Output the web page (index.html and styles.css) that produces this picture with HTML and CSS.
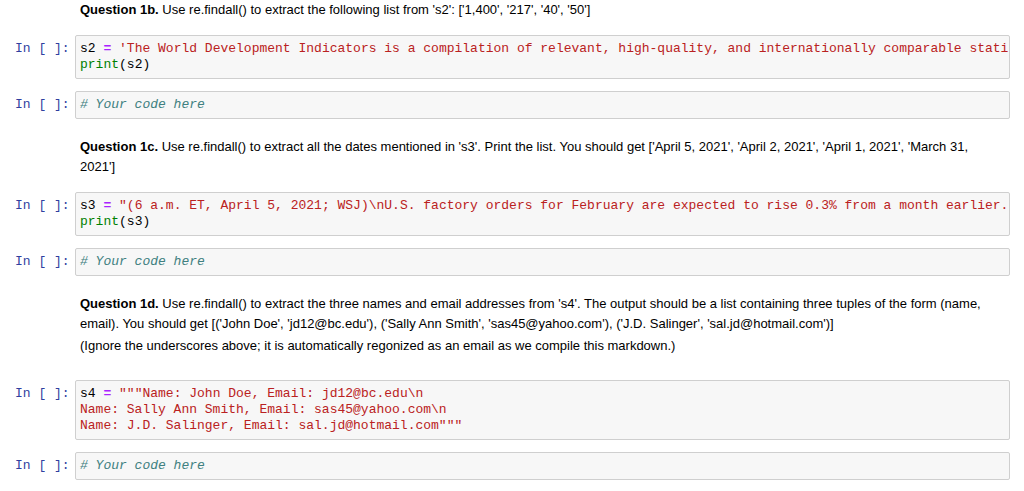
FILE: index.html
```html
<!DOCTYPE html>
<html>
<head>
<meta charset="utf-8">
<link rel="stylesheet" href="styles.css">
</head>
<body>
<div class="notebook">
  <div class="md md-first">
    <p><b>Question 1b.</b> Use re.findall() to extract the following list from 's2': ['1,400', '217', '40', '50']</p>
  </div>
  <div class="cell cell-after-md">
    <div class="prompt">In [ ]:</div>
    <div class="input"><span class="n">s2</span> <span class="o">=</span> <span class="s">'The World Development Indicators is a compilation of relevant, high-quality, and internationally comparable statistics about global development and the fight against poverty.'</span>
<span class="b">print</span>(<span class="n">s2</span>)</div>
  </div>
  <div class="cell cell-next">
    <div class="prompt">In [ ]:</div>
    <div class="input"><span class="c"># Your code here</span></div>
  </div>

  <div class="md md-mid">
    <p><b>Question 1c.</b> Use re.findall() to extract all the dates mentioned in 's3'. Print the list. You should get ['April 5, 2021', 'April 2, 2021', 'April 1, 2021', 'March 31, 2021']</p>
  </div>
  <div class="cell cell-after-md2">
    <div class="prompt">In [ ]:</div>
    <div class="input"><span class="n">s3</span> <span class="o">=</span> <span class="s">"(6 a.m. ET, April 5, 2021; WSJ)\nU.S. factory orders for February are expected to rise 0.3% from a month earlier."</span>
<span class="b">print</span>(<span class="n">s3</span>)</div>
  </div>
  <div class="cell cell-next">
    <div class="prompt">In [ ]:</div>
    <div class="input"><span class="c"># Your code here</span></div>
  </div>

  <div class="md md-mid">
    <p><b>Question 1d.</b> Use re.findall() to extract the three names and email addresses from 's4'. The output should be a list containing three tuples of the form (name, email). You should get [('John Doe', 'jd12@bc.edu'), ('Sally Ann Smith', 'sas45@yahoo.com'), ('J.D. Salinger', 'sal.jd@hotmail.com')]</p>
    <p class="p2">(Ignore the underscores above; it is automatically regonized as an email as we compile this markdown.)</p>
  </div>
  <div class="cell cell-after-md3">
    <div class="prompt">In [ ]:</div>
    <div class="input"><span class="n">s4</span> <span class="o">=</span> <span class="s">"""Name: John Doe, Email: jd12@bc.edu\n
Name: Sally Ann Smith, Email: sas45@yahoo.com\n
Name: J.D. Salinger, Email: sal.jd@hotmail.com"""</span></div>
  </div>
  <div class="cell cell-next">
    <div class="prompt">In [ ]:</div>
    <div class="input"><span class="c"># Your code here</span></div>
  </div>
</div>
</body>
</html>
```

FILE: styles.css
```css
html, body {
  margin: 0;
  padding: 0;
  background: #ffffff;
}

.notebook {
  width: 1010px;
  font-family: "Liberation Sans", Arial, sans-serif;
  color: #000;
}

.md {
  padding-left: 80px;
  padding-right: 22px;
  font-size: 13px;
  line-height: 20px;
}

.md p {
  margin: 0;
}

.md p.p2 {
  margin-top: 2px;
}

.md-mid {
  margin-top: 18px;
}

.cell {
  display: flex;
  align-items: flex-start;
}

.cell-after-md { margin-top: 15px; }
.cell-after-md2 { margin-top: 15px; }
.cell-after-md3 { margin-top: 24px; }
.cell-next { margin-top: 12px; }

.prompt {
  width: 75px;
  flex: none;
  box-sizing: border-box;
  padding-left: 15px;
  padding-top: 6px;
  font-family: "Liberation Mono", "Courier New", monospace;
  font-size: 13px;
  line-height: 16px;
  color: #303f9f;
  white-space: pre;
}

.input {
  flex: 1;
  min-width: 0;
  overflow: hidden;
  white-space: pre;
  background: #f7f7f7;
  border: 1px solid #cfcfcf;
  border-radius: 2px;
  padding: 5px 4px;
  font-family: "Liberation Mono", "Courier New", monospace;
  font-size: 13px;
  line-height: 16px;
  color: #000;
}

.n { color: #000; }
.o { color: #aa22ff; font-weight: bold; }
.s { color: #ba2121; }
.b { color: #008000; }
.c { color: #408080; font-style: italic; }
```
